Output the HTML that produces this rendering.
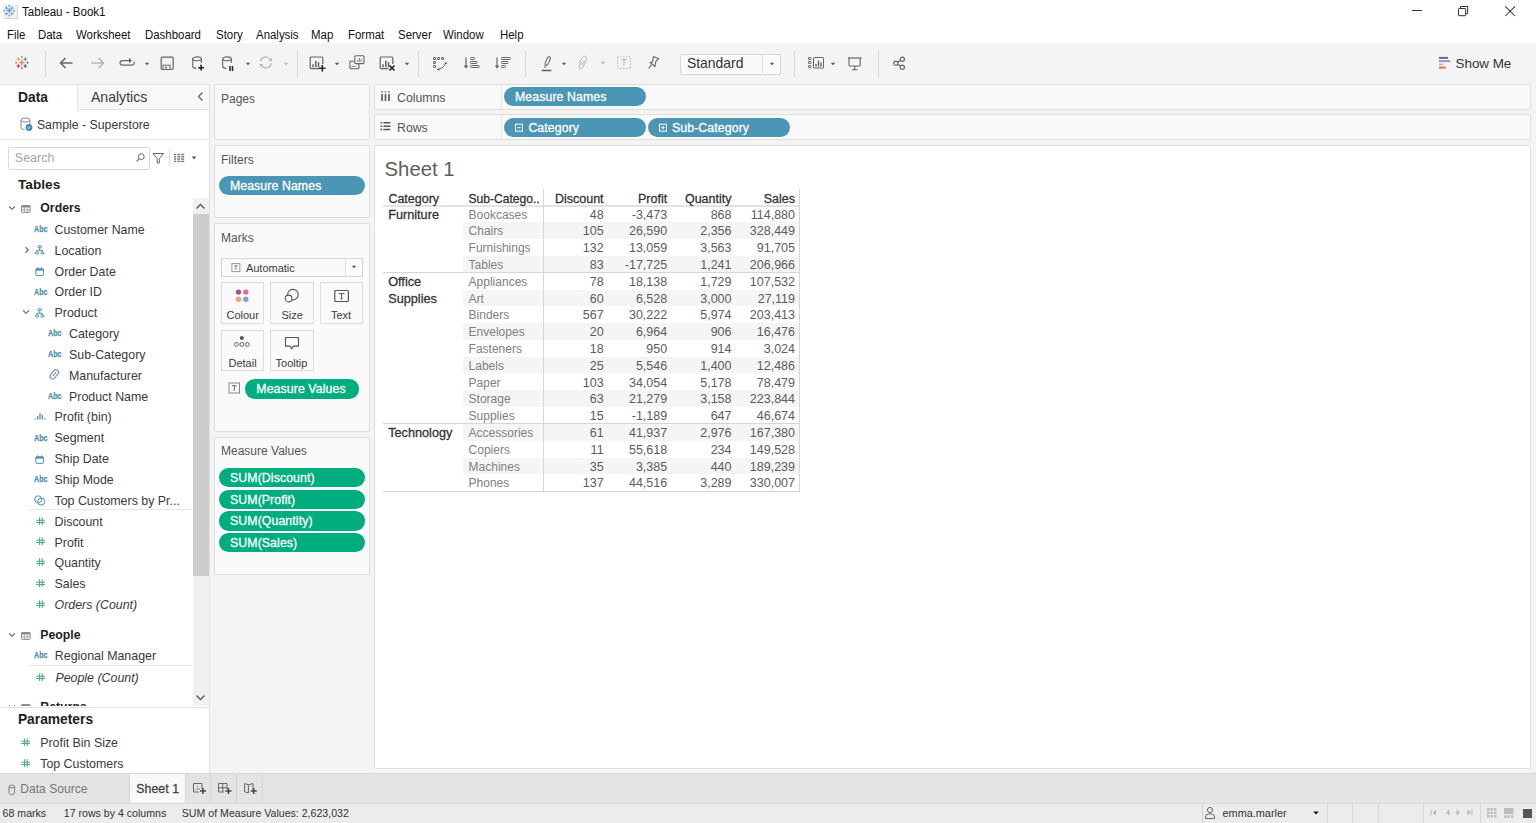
<!DOCTYPE html>
<html><head><meta charset="utf-8"><title>Tableau - Book1</title>
<style>
html,body{margin:0;padding:0;width:1536px;height:823px;overflow:hidden;background:#fff;}
body{position:relative;font-family:"Liberation Sans",sans-serif;}
body div{position:absolute;}
.t{white-space:nowrap;line-height:1;}
svg{overflow:visible}
</style></head><body>
<div style="left:0px;top:0px;width:1536px;height:43px;background:#fff"></div>
<div style="left:0px;top:43px;width:1536px;height:41px;background:#f4f4f4"></div>
<div style="left:0px;top:84px;width:1536px;height:689px;background:#f4f4f4"></div>
<div style="left:0px;top:84px;width:210px;height:1px;background:#e0e0e0"></div>
<div style="left:0px;top:85px;width:209px;height:688px;background:#fff"></div>
<div style="left:209px;top:85px;width:1px;height:688px;background:#e2e2e2"></div>
<div style="left:0px;top:773px;width:1536px;height:30px;background:#e4e4e4"></div>
<div style="left:0px;top:773px;width:1536px;height:1px;background:#d8d8d8"></div>
<div style="left:0px;top:803px;width:1536px;height:20px;background:#ececec"></div>
<div style="left:0px;top:803px;width:1536px;height:1px;background:#d9d9d9"></div>
<div class="t" style="left:21.5px;top:6.00px;font-size:12.3px;color:#111;font-weight:400;transform:scaleX(0.94);transform-origin:0 0;">Tableau - Book1</div>
<div style="left:1412px;top:10px;width:10px;height:1px;background:#333"></div>
<svg style="position:absolute;left:1456px;top:4px;" width="14" height="14" viewBox="0 0 14 14"><rect x="2.5" y="4.5" width="7.2" height="7.2" rx="0.6" fill="none" stroke="#333"/><path d="M4.5 4.3V2.5h7.2v7.2h-1.9" fill="none" stroke="#333"/></svg>
<svg style="position:absolute;left:1504px;top:5px;" width="13" height="13" viewBox="0 0 13 13"><path d="M1.3 1.3L11 11M11 1.3L1.3 11" stroke="#333" stroke-width="1.05"/></svg>
<div class="t" style="left:6.5px;top:29.00px;font-size:12.5px;color:#111;font-weight:400;transform:scaleX(0.915);transform-origin:0 0;">File</div>
<div class="t" style="left:38.3px;top:29.00px;font-size:12.5px;color:#111;font-weight:400;transform:scaleX(0.915);transform-origin:0 0;">Data</div>
<div class="t" style="left:76.3px;top:29.00px;font-size:12.5px;color:#111;font-weight:400;transform:scaleX(0.915);transform-origin:0 0;">Worksheet</div>
<div class="t" style="left:144.5px;top:29.00px;font-size:12.5px;color:#111;font-weight:400;transform:scaleX(0.915);transform-origin:0 0;">Dashboard</div>
<div class="t" style="left:215.6px;top:29.00px;font-size:12.5px;color:#111;font-weight:400;transform:scaleX(0.915);transform-origin:0 0;">Story</div>
<div class="t" style="left:256px;top:29.00px;font-size:12.5px;color:#111;font-weight:400;transform:scaleX(0.915);transform-origin:0 0;">Analysis</div>
<div class="t" style="left:310.7px;top:29.00px;font-size:12.5px;color:#111;font-weight:400;transform:scaleX(0.915);transform-origin:0 0;">Map</div>
<div class="t" style="left:347.7px;top:29.00px;font-size:12.5px;color:#111;font-weight:400;transform:scaleX(0.915);transform-origin:0 0;">Format</div>
<div class="t" style="left:397.7px;top:29.00px;font-size:12.5px;color:#111;font-weight:400;transform:scaleX(0.915);transform-origin:0 0;">Server</div>
<div class="t" style="left:443.3px;top:29.00px;font-size:12.5px;color:#111;font-weight:400;transform:scaleX(0.915);transform-origin:0 0;">Window</div>
<div class="t" style="left:500.3px;top:29.00px;font-size:12.5px;color:#111;font-weight:400;transform:scaleX(0.915);transform-origin:0 0;">Help</div>
<div style="left:45px;top:51px;width:1px;height:26px;background:#dadada"></div>
<div style="left:297px;top:51px;width:1px;height:26px;background:#dadada"></div>
<div style="left:418px;top:51px;width:1px;height:26px;background:#dadada"></div>
<div style="left:525px;top:51px;width:1px;height:26px;background:#dadada"></div>
<div style="left:794px;top:51px;width:1px;height:26px;background:#dadada"></div>
<div style="left:878px;top:51px;width:1px;height:26px;background:#dadada"></div>
<svg style="position:absolute;left:14px;top:55px;" width="16" height="16" viewBox="0 0 16 16"><path d="M5.05 7.6h5.6M7.85 4.8v5.6" stroke="#ef8a50" stroke-width="1.4"/><path d="M2.7 4.1h3.4M4.4 2.3999999999999995v3.4" stroke="#f4a34b" stroke-width="1.1"/><path d="M9.600000000000001 4.1h3.4M11.3 2.3999999999999995v3.4" stroke="#5b879b" stroke-width="1.1"/><path d="M2.7 11h3.4M4.4 9.3v3.4" stroke="#c72d4f" stroke-width="1.2"/><path d="M9.600000000000001 11h3.4M11.3 9.3v3.4" stroke="#3c5a8e" stroke-width="1.2"/><path d="M6.85 1.8h2M7.85 0.8v2" stroke="#7099a6" stroke-width="0.9"/><path d="M1.2000000000000002 7.6h2M2.2 6.6v2" stroke="#6a9bb5" stroke-width="0.9"/><path d="M12.5 7.6h2M13.5 6.6v2" stroke="#59578e" stroke-width="0.9"/><path d="M6.85 13.2h2M7.85 12.2v2" stroke="#6b6fa5" stroke-width="0.9"/></svg>
<svg style="position:absolute;left:59px;top:57px;" width="15" height="12" viewBox="0 0 15 12"><path d="M1.5 6H13.5M6.5 1L1.5 6L6.5 11" fill="none" stroke="#646464" stroke-width="1.5"/></svg>
<svg style="position:absolute;left:90px;top:57px;" width="15" height="12" viewBox="0 0 15 12"><path d="M13.5 6H1.5M8.5 1L13.5 6L8.5 11" fill="none" stroke="#b5b5b5" stroke-width="1.5"/></svg>
<svg style="position:absolute;left:119px;top:55px;" width="17" height="12" viewBox="0 0 17 12"><path d="M10.5 5.6H3.3a2.25 2.25 0 0 0 0 4.5H13a2.25 2.25 0 0 0 1.9-3.5" fill="none" stroke="#646464" stroke-width="1.15"/><path d="M10 2.7L12.9 5.6L10 8.5z" fill="#646464"/></svg>
<svg style="position:absolute;left:143.8px;top:61.5px;" width="6" height="4" viewBox="0 0 6 4"><path d="M0.7999999999999998 0.7h4.4l-2.2 2.6z" fill="#555"/></svg>
<svg style="position:absolute;left:160px;top:56px;" width="15" height="15" viewBox="0 0 15 15"><rect x="1.2" y="1.2" width="12" height="12.3" rx="1.2" fill="none" stroke="#646464" stroke-width="1.2"/><rect x="3" y="9.2" width="7" height="4.3" fill="none" stroke="#646464" stroke-width="1"/><rect x="5" y="10.8" width="2" height="1.5" fill="#646464"/></svg>
<svg style="position:absolute;left:192px;top:56px;" width="14" height="16" viewBox="0 0 14 16"><ellipse cx="5" cy="2.8" rx="4.3" ry="1.9" fill="none" stroke="#646464" stroke-width="1.1"/><path d="M0.7 2.8V10.5c0 1 1.5 1.7 3.5 1.9M9.3 2.8V7" fill="none" stroke="#646464" stroke-width="1.1"/><path d="M6.2 11.7H12M9.1 8.8V14.6" stroke="#222" stroke-width="1.6"/></svg>
<svg style="position:absolute;left:222px;top:56px;" width="14" height="16" viewBox="0 0 14 16"><ellipse cx="5" cy="2.8" rx="4.3" ry="1.9" fill="none" stroke="#646464" stroke-width="1.1"/><path d="M0.7 2.8V10.5c0 1 1.5 1.7 3.5 1.9M9.3 2.8V7" fill="none" stroke="#646464" stroke-width="1.1"/><path d="M8 10v5M10.5 10v5" stroke="#222" stroke-width="1.5"/></svg>
<svg style="position:absolute;left:244.6px;top:61.5px;" width="6" height="4" viewBox="0 0 6 4"><path d="M0.7999999999999998 0.7h4.4l-2.2 2.6z" fill="#555"/></svg>
<svg style="position:absolute;left:258px;top:55px;" width="16" height="15" viewBox="0 0 16 15"><path d="M2.5 6.5A5.5 5.5 0 0 1 12.5 4.5M13.3 8.3A5.5 5.5 0 0 1 3.3 10.3" fill="none" stroke="#b5b5b5" stroke-width="1.2"/><path d="M13.8 2.5v3.5h-3.5z" fill="#b5b5b5"/><path d="M2 12.5V9h3.5z" fill="#b5b5b5"/></svg>
<svg style="position:absolute;left:283px;top:61.5px;" width="6" height="4" viewBox="0 0 6 4"><path d="M0.7999999999999998 0.7h4.4l-2.2 2.6z" fill="#b5b5b5"/></svg>
<svg style="position:absolute;left:309px;top:56px;" width="18" height="16" viewBox="0 0 18 16"><path d="M10 12.7H2.2a1 1 0 0 1-1-1V2a1 1 0 0 1 1-1h10.6a1 1 0 0 1 1 1v6" fill="none" stroke="#646464" stroke-width="1.2"/><path d="M4 8.3v2.9M6.8 4.8v6.4M9.5 6.3v4.9" stroke="#646464" stroke-width="1.5"/><path d="M10 12.2h6.5M13.3 9v6.5" stroke="#222" stroke-width="1.6"/></svg>
<svg style="position:absolute;left:334.3px;top:61.5px;" width="6" height="4" viewBox="0 0 6 4"><path d="M0.7999999999999998 0.7h4.4l-2.2 2.6z" fill="#555"/></svg>
<svg style="position:absolute;left:349px;top:55px;" width="16" height="15" viewBox="0 0 16 15"><rect x="5.8" y="0.8" width="9.2" height="7.8" rx="1" fill="#f3f3f3" stroke="#646464" stroke-width="1.1"/><path d="M8.5 6.8v-1.4M10.3 6.8V3M12.1 6.8V4.3" stroke="#646464" stroke-width="0.9"/><path d="M5.5 6.2H1.8a0.9 0.9 0 0 0-0.9 0.9v5.8a0.9 0.9 0 0 0 0.9 0.9h7.2a0.9 0.9 0 0 0 0.9-0.9V8.8" fill="none" stroke="#646464" stroke-width="1.1"/><path d="M3 12v-1M4.6 12v-1M6.2 12v-1" stroke="#646464" stroke-width="0.9"/></svg>
<svg style="position:absolute;left:379px;top:56px;" width="18" height="16" viewBox="0 0 18 16"><path d="M9.5 12.7H2.2a1 1 0 0 1-1-1V2a1 1 0 0 1 1-1h10.6a1 1 0 0 1 1 1v6" fill="none" stroke="#646464" stroke-width="1.2"/><path d="M4 8.3v2.9M6.8 4.8v6.4M9.5 6.3v4.9" stroke="#646464" stroke-width="1.5"/><path d="M10.5 9.5l5 5M15.5 9.5l-5 5" stroke="#222" stroke-width="1.6"/></svg>
<svg style="position:absolute;left:404px;top:61.5px;" width="6" height="4" viewBox="0 0 6 4"><path d="M0.7999999999999998 0.7h4.4l-2.2 2.6z" fill="#555"/></svg>
<svg style="position:absolute;left:432px;top:56px;" width="16" height="16" viewBox="0 0 16 16"><g fill="none" stroke="#646464" stroke-width="1"><rect x="1.5" y="1.5" width="2" height="2" rx="0.3"/><rect x="5.5" y="1.5" width="2" height="2" rx="0.3"/><rect x="9.5" y="1.5" width="2" height="2" rx="0.3"/><rect x="1.5" y="5.5" width="2" height="2" rx="0.3"/><rect x="1.5" y="9.5" width="2" height="2" rx="0.3"/><path d="M6.5 13.3Q12 12 13.2 7.3"/></g><path d="M13.8 5.5l1.6 2.3-2.6 0.4z M4.6 13.5l2.6-1.4 0.2 2.6z" fill="#646464"/></svg>
<svg style="position:absolute;left:463px;top:56px;" width="17" height="15" viewBox="0 0 17 15"><path d="M3 1.5v9" stroke="#646464" stroke-width="1.2"/><path d="M0.8 9.6h4.4L3 12.8z" fill="#646464"/><g fill="none" stroke="#646464" stroke-width="1"><rect x="7.5" y="1.5" width="4" height="2" rx="0.8"/><rect x="7.5" y="5.5" width="6.5" height="2" rx="0.8"/><rect x="7.5" y="9.5" width="8.8" height="2" rx="0.8"/></g></svg>
<svg style="position:absolute;left:494px;top:56px;" width="17" height="15" viewBox="0 0 17 15"><path d="M3 1.5v9" stroke="#646464" stroke-width="1.2"/><path d="M0.8 9.6h4.4L3 12.8z" fill="#646464"/><g fill="none" stroke="#646464" stroke-width="1"><rect x="7.5" y="1.5" width="8.8" height="2" rx="0.8"/><rect x="7.5" y="5.5" width="6.5" height="2" rx="0.8"/><rect x="7.5" y="9.5" width="4" height="2" rx="0.8"/></g></svg>
<svg style="position:absolute;left:540px;top:55px;" width="13" height="17" viewBox="0 0 13 17"><g transform="rotate(24 7.5 6.5)" fill="none" stroke="#646464" stroke-width="1.05"><rect x="6" y="1.5" width="3" height="8.5" rx="1.3"/><path d="M6.3 11.3h2.4M6.8 12.8h1.2"/></g><path d="M1.7 15.5h9.6" stroke="#646464" stroke-width="1.6"/></svg>
<svg style="position:absolute;left:560.8px;top:61.5px;" width="6" height="4" viewBox="0 0 6 4"><path d="M0.7999999999999998 0.7h4.4l-2.2 2.6z" fill="#555"/></svg>
<svg style="position:absolute;left:576px;top:55px;" width="14" height="16" viewBox="0 0 14 16"><path d="M5.3 6.8L3 11.5a1.9 1.9 0 0 0 3.4 1.6L10.6 4.4a2.3 2.3 0 0 0-4.2-2L3.5 8.3M8.3 5.5L6 10.2" fill="none" stroke="#b5b5b5" stroke-width="1"/></svg>
<svg style="position:absolute;left:599.8px;top:61px;" width="6" height="4" viewBox="0 0 6 4"><path d="M0.7999999999999998 0.7h4.4l-2.2 2.6z" fill="#b5b5b5"/></svg>
<svg style="position:absolute;left:616px;top:56px;" width="16" height="14" viewBox="0 0 16 14"><rect x="1.5" y="1" width="13" height="11.5" fill="none" stroke="#b5b5b5" stroke-width="1" stroke-dasharray="1.5 1.3"/><path d="M5.2 3.6h5.6M8 3.6v6" stroke="#b5b5b5" stroke-width="1"/></svg>
<svg style="position:absolute;left:647px;top:55px;" width="13" height="15" viewBox="0 0 13 15"><path d="M6.5 1.5l5 2.3-2.6 2.6-1 5.3-2.3-2.3L3 7.5l2.5-0.6z M4.5 9.5L1.8 13.5" fill="none" stroke="#646464" stroke-width="1.1" stroke-linejoin="round"/></svg>
<div style="left:679.5px;top:53.5px;width:101px;height:21px;background:#fafafa;border:1px solid #d6d6d6;border-radius:2px;box-sizing:border-box"></div>
<div style="left:762px;top:54.5px;width:1px;height:19px;background:#e0e0e0"></div>
<div class="t" style="left:687px;top:57.00px;font-size:13.9px;color:#333;font-weight:400;">Standard</div>
<svg style="position:absolute;left:768.5px;top:61.6px;" width="6" height="4" viewBox="0 0 6 4"><path d="M0.7999999999999998 0.7h4.4l-2.2 2.6z" fill="#555"/></svg>
<svg style="position:absolute;left:807px;top:56px;" width="18" height="14" viewBox="0 0 18 14"><g fill="none" stroke="#646464" stroke-width="1"><rect x="1.5" y="1.5" width="2.5" height="2" rx="0.4"/><rect x="1.5" y="5.5" width="2.5" height="2" rx="0.4"/><rect x="1.5" y="9.5" width="2.5" height="2" rx="0.4"/><rect x="6.5" y="1.5" width="10" height="10.5" rx="0.6"/></g><path d="M9 10.5v-2.5M11.5 10.5V4.5M14 10.5V6.5" stroke="#646464" stroke-width="1.4"/></svg>
<svg style="position:absolute;left:830px;top:61.5px;" width="6" height="4" viewBox="0 0 6 4"><path d="M0.7999999999999998 0.7h4.4l-2.2 2.6z" fill="#555"/></svg>
<svg style="position:absolute;left:847px;top:56px;" width="16" height="15" viewBox="0 0 16 15"><path d="M0.8 2h14" stroke="#646464" stroke-width="1.2"/><path d="M2 2v7.2a0.8 0.8 0 0 0 0.8 0.8h9.6a0.8 0.8 0 0 0 0.8-0.8V2M7.7 10v3.8M5 13.7h5.5" fill="none" stroke="#646464" stroke-width="1.1"/></svg>
<svg style="position:absolute;left:892px;top:55px;" width="15" height="16" viewBox="0 0 15 16"><g fill="none" stroke="#646464" stroke-width="1.2"><circle cx="10.3" cy="4.3" r="2.1"/><circle cx="3.9" cy="8.2" r="2.1"/><circle cx="10.3" cy="12.2" r="2.1"/><path d="M5.8 7.1l2.6-1.7M5.8 9.3l2.6 1.7"/></g></svg>
<svg style="position:absolute;left:1438px;top:55px;" width="14" height="15" viewBox="0 0 14 15"><rect x="1" y="1.9" width="9" height="2" fill="#7b5f8f"/><rect x="1" y="5.1" width="11.2" height="2" fill="#7ea3c9"/><rect x="1" y="8.5" width="4" height="1.7" fill="#f1a571"/><rect x="1" y="11.5" width="6.7" height="2.2" fill="#f2697f"/></svg>
<div class="t" style="left:1455.5px;top:57.00px;font-size:13.4px;color:#333;font-weight:400;">Show Me</div>
<svg style="position:absolute;left:2px;top:3px;" width="17" height="17" viewBox="0 0 17 17"><rect x="1.5" y="1.5" width="14.5" height="14.5" fill="#c8c8c8" opacity="0.8"/><rect x="1" y="1" width="14" height="14" fill="#f2f2f2"/><path d="M4.699999999999999 7.5h5.2M7.3 4.9v5.2" stroke="#5b9bcf" stroke-width="1.3"/><path d="M2.9000000000000004 5.1h3.0M4.4 3.5999999999999996v3.0" stroke="#6aa6d6" stroke-width="1.2"/><path d="M8.4 5.1h3.0M9.9 3.5999999999999996v3.0" stroke="#6aa6d6" stroke-width="1.2"/><path d="M2.9000000000000004 10.7h3.0M4.4 9.2v3.0" stroke="#6aa6d6" stroke-width="1.2"/><path d="M8.4 10.7h3.0M9.9 9.2v3.0" stroke="#6aa6d6" stroke-width="1.2"/><g fill="#6aa6d6"><circle cx="7.3" cy="2.9" r="1"/><circle cx="2.3" cy="7.7" r="1"/><circle cx="12" cy="7.7" r="1"/><circle cx="7.3" cy="12.5" r="1"/></g></svg>
<div style="left:77px;top:85px;width:132px;height:25px;background:#f8f8f8;border-left:1px solid #e3e3e3;border-bottom:1px solid #e3e3e3;box-sizing:border-box"></div>
<div class="t" style="left:18px;top:91.00px;font-size:13.8px;color:#1e1e1e;font-weight:700;">Data</div>
<div class="t" style="left:90.9px;top:90.00px;font-size:14.1px;color:#3a3a3a;font-weight:400;">Analytics</div>
<svg style="position:absolute;left:196px;top:91px;" width="9" height="11" viewBox="0 0 9 11"><path d="M6.5 1.5L2.5 5.5L6.5 9.5" fill="none" stroke="#555" stroke-width="1.1"/></svg>
<svg style="position:absolute;left:20px;top:117px;" width="14" height="15" viewBox="0 0 14 15"><path d="M1 3v7.8c0 1 1.6 1.7 3.6 1.8" fill="none" stroke="#888" stroke-width="1"/><ellipse cx="5.5" cy="3" rx="4.5" ry="2" fill="none" stroke="#888" stroke-width="1"/><path d="M10 3v4" stroke="#888" stroke-width="1"/><circle cx="9" cy="10.5" r="3.4" fill="#3d8fb5"/><path d="M7.4 10.5l1.1 1.1 2-2" fill="none" stroke="#fff" stroke-width="0.9"/></svg>
<div class="t" style="left:36.9px;top:119.00px;font-size:12.3px;color:#3a3a3a;font-weight:400;">Sample - Superstore</div>
<div style="left:0px;top:139px;width:209px;height:1px;background:#e6e6e6"></div>
<div style="left:8px;top:147px;width:142px;height:23px;background:#fff;border:1px solid #d9d9d9;border-radius:2px;box-sizing:border-box"></div>
<div class="t" style="left:14.8px;top:152.00px;font-size:12.5px;color:#a5a5a5;font-weight:400;">Search</div>
<svg style="position:absolute;left:135px;top:152px;" width="11" height="11" viewBox="0 0 11 11"><circle cx="6.3" cy="4.6" r="2.9" fill="none" stroke="#666" stroke-width="1"/><path d="M4.2 6.8L1.6 9.4" stroke="#666" stroke-width="1.1"/></svg>
<svg style="position:absolute;left:152px;top:152px;" width="13" height="12" viewBox="0 0 13 12"><path d="M1 1.5h10.5L7.3 6.5V11H5.2V6.5z" fill="none" stroke="#666" stroke-width="1" stroke-linejoin="round"/></svg>
<div style="left:169px;top:150px;width:1px;height:16px;background:#ddd"></div>
<svg style="position:absolute;left:173px;top:153px;" width="12" height="10" viewBox="0 0 12 10"><g fill="#777"><rect x="1" y="0.8" width="2" height="1.4"/><rect x="4.3" y="0.8" width="3" height="1.4"/><rect x="8.2" y="0.8" width="3" height="1.4"/><rect x="1" y="3.1" width="2" height="1.4"/><rect x="4.3" y="3.1" width="3" height="1.4"/><rect x="8.2" y="3.1" width="3" height="1.4"/><rect x="1" y="5.4" width="2" height="1.4"/><rect x="4.3" y="5.4" width="3" height="1.4"/><rect x="8.2" y="5.4" width="3" height="1.4"/><rect x="1" y="7.7" width="2" height="1.4"/><rect x="4.3" y="7.7" width="3" height="1.4"/><rect x="8.2" y="7.7" width="3" height="1.4"/></g></svg>
<svg style="position:absolute;left:191px;top:156.3px;" width="6" height="4" viewBox="0 0 6 4"><path d="M0.7000000000000002 0.6000000000000001h4.6l-2.3 2.8z" fill="#555"/></svg>
<div class="t" style="left:18px;top:178.00px;font-size:13.7px;color:#1e1e1e;font-weight:700;">Tables</div>
<svg style="position:absolute;left:7.5px;top:205px;" width="8" height="6" viewBox="0 0 8 6"><path d="M1.2 1.5L4 4.3L6.8 1.5" fill="none" stroke="#666" stroke-width="1.1"/></svg>
<svg style="position:absolute;left:21px;top:204.5px;" width="10" height="9" viewBox="0 0 10 9"><rect x="0.5" y="0.5" width="8.6" height="6.9" rx="0.8" fill="#fff" stroke="#8a8a8a" stroke-width="1"/><rect x="0.5" y="0.5" width="8.6" height="2" fill="#8a8a8a"/><path d="M3.3 2.5v5M6.2 2.5v5M0.5 4.9h8.6" stroke="#8a8a8a" stroke-width="0.7"/></svg>
<div class="t" style="left:40.3px;top:202.00px;font-size:12.3px;color:#1e1e1e;font-weight:700;">Orders</div>
<div class="t" style="left:33.5px;top:226.00px;font-size:8.2px;color:#4f8dab;font-weight:700;transform:scaleX(0.87);transform-origin:0 0;-webkit-text-stroke:0.25px #4f8dab;">Abc</div>
<div class="t" style="left:54.5px;top:224.00px;font-size:12.4px;color:#3a3a3a;font-weight:400;">Customer Name</div>
<svg style="position:absolute;left:34.8px;top:245.05px;" width="10" height="10" viewBox="0 0 10 10"><g fill="none" stroke="#4f8dab" stroke-width="1"><rect x="3" y="0.7" width="3.4" height="2" rx="1"/><path d="M4.7 2.7v2.6M1.9 7V5.3h5.6V7"/><rect x="0.4" y="7" width="3.2" height="2" rx="1"/><rect x="5.8" y="7" width="3.2" height="2" rx="1"/></g></svg>
<svg style="position:absolute;left:23.5px;top:245.65px;" width="6" height="8" viewBox="0 0 6 8"><path d="M1.5 1.2L4.3 4L1.5 6.8" fill="none" stroke="#666" stroke-width="1.1"/></svg>
<div class="t" style="left:54.5px;top:245.00px;font-size:12.4px;color:#3a3a3a;font-weight:400;">Location</div>
<svg style="position:absolute;left:35.2px;top:267.3px;" width="10" height="10" viewBox="0 0 10 10"><rect x="0.8" y="1.8" width="7.6" height="6.6" rx="0.7" fill="none" stroke="#4f8dab" stroke-width="1"/><rect x="0.8" y="1.8" width="7.6" height="1.8" fill="#4f8dab"/><path d="M2.6 0.3v1.8M6.6 0.3v1.8" stroke="#4f8dab" stroke-width="1"/></svg>
<div class="t" style="left:54.5px;top:266.00px;font-size:12.4px;color:#3a3a3a;font-weight:400;">Order Date</div>
<div class="t" style="left:33.5px;top:289.00px;font-size:8.2px;color:#4f8dab;font-weight:700;transform:scaleX(0.87);transform-origin:0 0;-webkit-text-stroke:0.25px #4f8dab;">Abc</div>
<div class="t" style="left:54.5px;top:286.00px;font-size:12.4px;color:#3a3a3a;font-weight:400;">Order ID</div>
<svg style="position:absolute;left:34.8px;top:307.6px;" width="10" height="10" viewBox="0 0 10 10"><g fill="none" stroke="#4f8dab" stroke-width="1"><rect x="3" y="0.7" width="3.4" height="2" rx="1"/><path d="M4.7 2.7v2.6M1.9 7V5.3h5.6V7"/><rect x="0.4" y="7" width="3.2" height="2" rx="1"/><rect x="5.8" y="7" width="3.2" height="2" rx="1"/></g></svg>
<svg style="position:absolute;left:22px;top:308.70000000000005px;" width="8" height="6" viewBox="0 0 8 6"><path d="M1.2 1.5L4 4.3L6.8 1.5" fill="none" stroke="#666" stroke-width="1.1"/></svg>
<div class="t" style="left:54.5px;top:307.00px;font-size:12.4px;color:#3a3a3a;font-weight:400;">Product</div>
<div class="t" style="left:48px;top:330.00px;font-size:8.2px;color:#4f8dab;font-weight:700;transform:scaleX(0.87);transform-origin:0 0;-webkit-text-stroke:0.25px #4f8dab;">Abc</div>
<div class="t" style="left:69px;top:328.00px;font-size:12.4px;color:#3a3a3a;font-weight:400;">Category</div>
<div class="t" style="left:48px;top:351.00px;font-size:8.2px;color:#4f8dab;font-weight:700;transform:scaleX(0.87);transform-origin:0 0;-webkit-text-stroke:0.25px #4f8dab;">Abc</div>
<div class="t" style="left:69px;top:349.00px;font-size:12.4px;color:#3a3a3a;font-weight:400;">Sub-Category</div>
<svg style="position:absolute;left:49px;top:368.75px;" width="11" height="11" viewBox="0 0 11 11"><g transform="rotate(40 5.5 5.5)" fill="none" stroke="#4f8dab" stroke-width="1"><rect x="2.6" y="0.3" width="5.2" height="10.4" rx="2.6"/><path d="M5.2 2.8v5.2"/></g></svg>
<div class="t" style="left:69px;top:370.00px;font-size:12.4px;color:#3a3a3a;font-weight:400;">Manufacturer</div>
<div class="t" style="left:48px;top:393.00px;font-size:8.2px;color:#4f8dab;font-weight:700;transform:scaleX(0.87);transform-origin:0 0;-webkit-text-stroke:0.25px #4f8dab;">Abc</div>
<div class="t" style="left:69px;top:391.00px;font-size:12.4px;color:#3a3a3a;font-weight:400;">Product Name</div>
<svg style="position:absolute;left:33.8px;top:412.45000000000005px;" width="12" height="8" viewBox="0 0 12 8"><path d="M1 6.6v1M3.6 4v3.6M6 1v6.6M8.4 3v4.6M11 6.2v1.4" stroke="#4f8dab" stroke-width="1.3"/></svg>
<div class="t" style="left:54.5px;top:411.00px;font-size:12.4px;color:#3a3a3a;font-weight:400;">Profit (bin)</div>
<div class="t" style="left:33.5px;top:435.00px;font-size:8.2px;color:#4f8dab;font-weight:700;transform:scaleX(0.87);transform-origin:0 0;-webkit-text-stroke:0.25px #4f8dab;">Abc</div>
<div class="t" style="left:54.5px;top:432.00px;font-size:12.4px;color:#3a3a3a;font-weight:400;">Segment</div>
<svg style="position:absolute;left:35.2px;top:454.95000000000005px;" width="10" height="10" viewBox="0 0 10 10"><rect x="0.8" y="1.8" width="7.6" height="6.6" rx="0.7" fill="none" stroke="#4f8dab" stroke-width="1"/><rect x="0.8" y="1.8" width="7.6" height="1.8" fill="#4f8dab"/><path d="M2.6 0.3v1.8M6.6 0.3v1.8" stroke="#4f8dab" stroke-width="1"/></svg>
<div class="t" style="left:54.5px;top:453.00px;font-size:12.4px;color:#3a3a3a;font-weight:400;">Ship Date</div>
<div class="t" style="left:33.5px;top:476.00px;font-size:8.2px;color:#4f8dab;font-weight:700;transform:scaleX(0.87);transform-origin:0 0;-webkit-text-stroke:0.25px #4f8dab;">Abc</div>
<div class="t" style="left:54.5px;top:474.00px;font-size:12.4px;color:#3a3a3a;font-weight:400;">Ship Mode</div>
<svg style="position:absolute;left:33.8px;top:494.65000000000003px;" width="12" height="11" viewBox="0 0 12 11"><circle cx="4.3" cy="4.3" r="3.5" fill="none" stroke="#4f8dab" stroke-width="1"/><circle cx="7.2" cy="6.6" r="3.5" fill="none" stroke="#4f8dab" stroke-width="1"/></svg>
<div class="t" style="left:54.5px;top:495.00px;font-size:12.4px;color:#3a3a3a;font-weight:400;">Top Customers by Pr...</div>
<svg style="position:absolute;left:36px;top:517px;" width="10" height="9" viewBox="0 0 10 9"><path d="M3.6 0.2v7.8M6.2 0.2v7.8M0.2 3.2h8.8M0.2 5.5h8.8" stroke="#4ba98a" stroke-width="1.05"/></svg>
<div class="t" style="left:54.5px;top:516.00px;font-size:12.4px;color:#3a3a3a;font-weight:400;">Discount</div>
<svg style="position:absolute;left:36px;top:537px;" width="10" height="9" viewBox="0 0 10 9"><path d="M3.6 0.2v7.8M6.2 0.2v7.8M0.2 3.2h8.8M0.2 5.5h8.8" stroke="#4ba98a" stroke-width="1.05"/></svg>
<div class="t" style="left:54.5px;top:537.00px;font-size:12.4px;color:#3a3a3a;font-weight:400;">Profit</div>
<svg style="position:absolute;left:36px;top:558px;" width="10" height="9" viewBox="0 0 10 9"><path d="M3.6 0.2v7.8M6.2 0.2v7.8M0.2 3.2h8.8M0.2 5.5h8.8" stroke="#4ba98a" stroke-width="1.05"/></svg>
<div class="t" style="left:54.5px;top:557.00px;font-size:12.4px;color:#3a3a3a;font-weight:400;">Quantity</div>
<svg style="position:absolute;left:36px;top:579px;" width="10" height="9" viewBox="0 0 10 9"><path d="M3.6 0.2v7.8M6.2 0.2v7.8M0.2 3.2h8.8M0.2 5.5h8.8" stroke="#4ba98a" stroke-width="1.05"/></svg>
<div class="t" style="left:54.5px;top:578.00px;font-size:12.4px;color:#3a3a3a;font-weight:400;">Sales</div>
<svg style="position:absolute;left:36px;top:600px;" width="10" height="9" viewBox="0 0 10 9"><path d="M3.6 0.2v7.8M6.2 0.2v7.8M0.2 3.2h8.8M0.2 5.5h8.8" stroke="#4ba98a" stroke-width="1.05"/></svg>
<div class="t" style="left:54.5px;top:599.00px;font-size:12.4px;color:#3a3a3a;font-weight:400;"><i>Orders (Count)</i></div>
<div style="left:29px;top:509px;width:163px;height:1px;background:#e8e8e8"></div>
<svg style="position:absolute;left:7.5px;top:632px;" width="8" height="6" viewBox="0 0 8 6"><path d="M1.2 1.5L4 4.3L6.8 1.5" fill="none" stroke="#666" stroke-width="1.1"/></svg>
<svg style="position:absolute;left:21px;top:631.5px;" width="10" height="9" viewBox="0 0 10 9"><rect x="0.5" y="0.5" width="8.6" height="6.9" rx="0.8" fill="#fff" stroke="#8a8a8a" stroke-width="1"/><rect x="0.5" y="0.5" width="8.6" height="2" fill="#8a8a8a"/><path d="M3.3 2.5v5M6.2 2.5v5M0.5 4.9h8.6" stroke="#8a8a8a" stroke-width="0.7"/></svg>
<div class="t" style="left:40.3px;top:629.00px;font-size:12.3px;color:#1e1e1e;font-weight:700;">People</div>
<div class="t" style="left:33.5px;top:652.00px;font-size:8.2px;color:#4f8dab;font-weight:700;transform:scaleX(0.87);transform-origin:0 0;-webkit-text-stroke:0.25px #4f8dab;">Abc</div>
<div class="t" style="left:54.8px;top:650.00px;font-size:12.4px;color:#3a3a3a;font-weight:400;">Regional Manager</div>
<div style="left:29px;top:665px;width:163px;height:1px;background:#e8e8e8"></div>
<svg style="position:absolute;left:36px;top:673px;" width="10" height="9" viewBox="0 0 10 9"><path d="M3.6 0.2v7.8M6.2 0.2v7.8M0.2 3.2h8.8M0.2 5.5h8.8" stroke="#4ba98a" stroke-width="1.05"/></svg>
<div class="t" style="left:55.4px;top:672.00px;font-size:12.4px;color:#3a3a3a;font-weight:400;"><i>People (Count)</i></div>
<svg style="position:absolute;left:7.5px;top:704px;" width="8" height="6" viewBox="0 0 8 6"><path d="M1.2 1.5L4 4.3L6.8 1.5" fill="none" stroke="#666" stroke-width="1.1"/></svg>
<svg style="position:absolute;left:21px;top:703.5px;" width="10" height="9" viewBox="0 0 10 9"><rect x="0.5" y="0.5" width="8.6" height="6.9" rx="0.8" fill="#fff" stroke="#8a8a8a" stroke-width="1"/><rect x="0.5" y="0.5" width="8.6" height="2" fill="#8a8a8a"/><path d="M3.3 2.5v5M6.2 2.5v5M0.5 4.9h8.6" stroke="#8a8a8a" stroke-width="0.7"/></svg>
<div class="t" style="left:40.3px;top:701.00px;font-size:12.3px;color:#1e1e1e;font-weight:700;">Returns</div>
<div style="left:0px;top:705.5px;width:209px;height:67.5px;background:#fff"></div>
<div style="left:193px;top:198px;width:15.5px;height:507.5px;background:#f0f0f0"></div>
<div style="left:193px;top:214.3px;width:15.5px;height:362.2px;background:#cdcdcd"></div>
<svg style="position:absolute;left:195px;top:203px;" width="11" height="7" viewBox="0 0 11 7"><path d="M1.5 5.5L5.5 1.5L9.5 5.5" fill="none" stroke="#555" stroke-width="1.3"/></svg>
<svg style="position:absolute;left:195px;top:694px;" width="11" height="7" viewBox="0 0 11 7"><path d="M1.5 1.5L5.5 5.5L9.5 1.5" fill="none" stroke="#555" stroke-width="1.3"/></svg>
<div style="left:0px;top:707px;width:209px;height:1px;background:#e3e3e3"></div>
<div class="t" style="left:17.9px;top:713.00px;font-size:13.8px;color:#1e1e1e;font-weight:700;">Parameters</div>
<svg style="position:absolute;left:21px;top:738px;" width="10" height="9" viewBox="0 0 10 9"><path d="M3.6 0.2v7.8M6.2 0.2v7.8M0.2 3.2h8.8M0.2 5.5h8.8" stroke="#4ba98a" stroke-width="1.05"/></svg>
<div class="t" style="left:40.2px;top:737.00px;font-size:12.4px;color:#3a3a3a;font-weight:400;">Profit Bin Size</div>
<svg style="position:absolute;left:21px;top:759px;" width="10" height="9" viewBox="0 0 10 9"><path d="M3.6 0.2v7.8M6.2 0.2v7.8M0.2 3.2h8.8M0.2 5.5h8.8" stroke="#4ba98a" stroke-width="1.05"/></svg>
<div class="t" style="left:40.2px;top:758.00px;font-size:12.4px;color:#3a3a3a;font-weight:400;">Top Customers</div>
<div style="left:214px;top:84px;width:156px;height:56px;background:#fafafa;border:1px solid #dedede;border-radius:2px;box-sizing:border-box"></div>
<div class="t" style="left:221px;top:93.00px;font-size:12px;color:#555;font-weight:400;">Pages</div>
<div style="left:214px;top:145px;width:156px;height:73px;background:#fafafa;border:1px solid #dedede;border-radius:2px;box-sizing:border-box"></div>
<div class="t" style="left:221px;top:154.00px;font-size:12px;color:#555;font-weight:400;">Filters</div>
<div style="left:219px;top:176px;width:146px;height:19.2px;background:#4a96b4;border-radius:9.6px"></div>
<div class="t" style="left:229.9px;top:180.00px;font-size:12.3px;color:#fff;font-weight:400;letter-spacing:0.1px;-webkit-text-stroke:0.28px #fff;">Measure Names</div>
<div style="left:214px;top:223px;width:156px;height:209px;background:#fafafa;border:1px solid #dedede;border-radius:2px;box-sizing:border-box"></div>
<div class="t" style="left:221px;top:232.00px;font-size:12px;color:#555;font-weight:400;">Marks</div>
<div style="left:221px;top:257.5px;width:142px;height:19.5px;background:#fafafa;border:1px solid #d6d6d6;box-sizing:border-box"></div>
<div style="left:345px;top:258px;width:1px;height:18.5px;background:#e0e0e0"></div>
<svg style="position:absolute;left:231px;top:263px;" width="10" height="10" viewBox="0 0 10 10"><rect x="0.9" y="0.6" width="8" height="8" fill="none" stroke="#999" stroke-width="1"/><path d="M3 2.8h3.8M4.9 2.8v4" stroke="#888" stroke-width="1"/></svg>
<div class="t" style="left:245.9px;top:263.00px;font-size:11px;color:#3a3a3a;font-weight:400;">Automatic</div>
<svg style="position:absolute;left:350.5px;top:265px;" width="6" height="4" viewBox="0 0 6 4"><path d="M0.7999999999999998 0.7h4.4l-2.2 2.6z" fill="#555"/></svg>
<div style="left:221px;top:282.3px;width:43px;height:41.5px;background:#fafafa;border:1px solid #dcdcdc;box-sizing:border-box"></div>
<div style="left:269.5px;top:282.3px;width:44.5px;height:41.5px;background:#fafafa;border:1px solid #dcdcdc;box-sizing:border-box"></div>
<div style="left:320px;top:282.3px;width:43px;height:41.5px;background:#fafafa;border:1px solid #dcdcdc;box-sizing:border-box"></div>
<div style="left:221px;top:329.5px;width:43px;height:41.5px;background:#fafafa;border:1px solid #dcdcdc;box-sizing:border-box"></div>
<div style="left:269.5px;top:329.5px;width:44.5px;height:41.5px;background:#fafafa;border:1px solid #dcdcdc;box-sizing:border-box"></div>
<svg style="position:absolute;left:234px;top:288px;" width="16" height="15" viewBox="0 0 16 15"><circle cx="4.5" cy="4.1" r="2.7" fill="#7e6592"/><circle cx="11.8" cy="4.1" r="2.7" fill="#f06a83"/><circle cx="4.5" cy="11.2" r="2.7" fill="#f2a56f"/><circle cx="11.8" cy="11.2" r="2.7" fill="#7ea4ca"/></svg>
<div class="t" style="left:226.5px;top:310.00px;font-size:11px;color:#3a3a3a;font-weight:400;">Colour</div>
<svg style="position:absolute;left:284px;top:288px;" width="16" height="16" viewBox="0 0 16 16"><circle cx="8.9" cy="6.7" r="5.3" fill="none" stroke="#555" stroke-width="1.1"/><circle cx="4.6" cy="10.5" r="3.4" fill="#fafafa" stroke="#555" stroke-width="1.1"/></svg>
<div class="t" style="left:281.5px;top:310.00px;font-size:11px;color:#3a3a3a;font-weight:400;">Size</div>
<svg style="position:absolute;left:333px;top:289px;" width="17" height="14" viewBox="0 0 17 14"><rect x="1.8" y="1.5" width="13.6" height="11" rx="1" fill="none" stroke="#555" stroke-width="1.2"/><path d="M5.8 4.6h5.6M8.6 4.6v5.2M7.4 9.8h2.4" fill="none" stroke="#555" stroke-width="1"/></svg>
<div class="t" style="left:331px;top:310.00px;font-size:11px;color:#3a3a3a;font-weight:400;">Text</div>
<svg style="position:absolute;left:233px;top:335px;" width="18" height="14" viewBox="0 0 18 14"><circle cx="8.8" cy="3" r="2" fill="#555"/><circle cx="3.4" cy="9.4" r="1.9" fill="none" stroke="#555" stroke-width="0.9"/><circle cx="8.8" cy="9.4" r="1.9" fill="none" stroke="#555" stroke-width="0.9"/><circle cx="14.2" cy="9.4" r="1.9" fill="none" stroke="#555" stroke-width="0.9"/></svg>
<div class="t" style="left:228.5px;top:358.00px;font-size:11px;color:#3a3a3a;font-weight:400;">Detail</div>
<svg style="position:absolute;left:284px;top:336px;" width="17" height="15" viewBox="0 0 17 15"><path d="M1.5 1.5h13v8.6H9.3L7.6 13L6 10.1H1.5z" fill="none" stroke="#555" stroke-width="1.1" stroke-linejoin="round"/></svg>
<div class="t" style="left:275.6px;top:358.00px;font-size:11px;color:#3a3a3a;font-weight:400;">Tooltip</div>
<svg style="position:absolute;left:228px;top:382px;" width="13" height="13" viewBox="0 0 13 13"><rect x="1" y="1" width="10.5" height="10" fill="none" stroke="#888" stroke-width="1"/><path d="M3.8 3.8h5M6.3 3.8v5" stroke="#666" stroke-width="1"/></svg>
<div style="left:245.4px;top:379px;width:114px;height:19.5px;background:#00ad7e;border-radius:9.75px"></div>
<div class="t" style="left:256.3px;top:383.00px;font-size:12.3px;color:#fff;font-weight:400;letter-spacing:0.1px;-webkit-text-stroke:0.28px #fff;">Measure Values</div>
<div style="left:214px;top:437px;width:156px;height:138px;background:#fafafa;border:1px solid #dedede;border-radius:2px;box-sizing:border-box"></div>
<div class="t" style="left:221px;top:445.00px;font-size:12px;color:#555;font-weight:400;">Measure Values</div>
<div style="left:219px;top:467.8px;width:146px;height:19.5px;background:#00ad7e;border-radius:9.75px"></div>
<div class="t" style="left:230px;top:472.00px;font-size:12.3px;color:#fff;font-weight:400;letter-spacing:0.1px;-webkit-text-stroke:0.28px #fff;">SUM(Discount)</div>
<div style="left:219px;top:489.5px;width:146px;height:19.5px;background:#00ad7e;border-radius:9.75px"></div>
<div class="t" style="left:230px;top:494.00px;font-size:12.3px;color:#fff;font-weight:400;letter-spacing:0.1px;-webkit-text-stroke:0.28px #fff;">SUM(Profit)</div>
<div style="left:219px;top:511.2px;width:146px;height:19.5px;background:#00ad7e;border-radius:9.75px"></div>
<div class="t" style="left:230px;top:515.00px;font-size:12.3px;color:#fff;font-weight:400;letter-spacing:0.1px;-webkit-text-stroke:0.28px #fff;">SUM(Quantity)</div>
<div style="left:219px;top:532.9px;width:146px;height:19.5px;background:#00ad7e;border-radius:9.75px"></div>
<div class="t" style="left:230px;top:537.00px;font-size:12.3px;color:#fff;font-weight:400;letter-spacing:0.1px;-webkit-text-stroke:0.28px #fff;">SUM(Sales)</div>
<div style="left:374px;top:84px;width:1157px;height:26px;background:#f9f9f9;border:1px solid #dedede;border-radius:2px;box-sizing:border-box"></div>
<div style="left:374px;top:114px;width:1157px;height:26px;background:#f9f9f9;border:1px solid #dedede;border-radius:2px;box-sizing:border-box"></div>
<div style="left:501px;top:85px;width:1px;height:24px;background:#e3e3e3"></div>
<div style="left:501px;top:115px;width:1px;height:24px;background:#e3e3e3"></div>
<svg style="position:absolute;left:380px;top:90px;" width="11" height="12" viewBox="0 0 11 12"><path d="M2 4v7M5.5 4v7M9 4v7" stroke="#555" stroke-width="1.6"/><path d="M2 1.3v1.2M5.5 1.3v1.2M9 1.3v1.2" stroke="#555" stroke-width="1.6"/></svg>
<div class="t" style="left:397px;top:92.00px;font-size:12.3px;color:#555;font-weight:400;">Columns</div>
<svg style="position:absolute;left:380px;top:121px;" width="11" height="11" viewBox="0 0 11 11"><path d="M0.5 1.8h1.6M0.5 5.2h1.6M0.5 8.6h1.6" stroke="#555" stroke-width="1.5"/><path d="M3.4 1.8h7M3.4 5.2h7M3.4 8.6h7" stroke="#555" stroke-width="1.5"/></svg>
<div class="t" style="left:397px;top:122.00px;font-size:12.3px;color:#555;font-weight:400;">Rows</div>
<div style="left:504.2px;top:87.2px;width:141.8px;height:19.2px;background:#4a96b4;border-radius:9.6px"></div>
<div class="t" style="left:515px;top:91.00px;font-size:12.3px;color:#fff;font-weight:400;letter-spacing:0.1px;-webkit-text-stroke:0.28px #fff;">Measure Names</div>
<div style="left:504.2px;top:117.7px;width:141.8px;height:19.2px;background:#4a96b4;border-radius:9.6px"></div>
<div class="t" style="left:528.4px;top:122.00px;font-size:12.3px;color:#fff;font-weight:400;letter-spacing:0.1px;-webkit-text-stroke:0.28px #fff;">Category</div>
<div style="left:648.2px;top:117.7px;width:142px;height:19.2px;background:#4a96b4;border-radius:9.6px"></div>
<div class="t" style="left:672px;top:122.00px;font-size:12.3px;color:#fff;font-weight:400;letter-spacing:0.1px;-webkit-text-stroke:0.28px #fff;">Sub-Category</div>
<svg style="position:absolute;left:514px;top:123px;" width="10" height="10" viewBox="0 0 10 10"><rect x="1.5" y="1.2" width="7" height="7" fill="none" stroke="#fff" stroke-width="1"/><path d="M3.2 4.7h3.6" stroke="#fff" stroke-width="1"/></svg>
<svg style="position:absolute;left:658px;top:123px;" width="10" height="10" viewBox="0 0 10 10"><rect x="1.5" y="1.2" width="7" height="7" fill="none" stroke="#fff" stroke-width="1"/><path d="M3.2 4.7h3.6M5 2.9v3.6" stroke="#fff" stroke-width="1"/></svg>
<div style="left:374px;top:145px;width:1157px;height:624px;background:#fff;border:1px solid #dedede;border-radius:2px;box-sizing:border-box"></div>
<div class="t" style="left:384.6px;top:159.00px;font-size:20.3px;color:#5e5e5e;font-weight:400;">Sheet 1</div>
<div style="left:463.1px;top:222.3px;width:336.2px;height:16.8px;background:#f5f5f5"></div>
<div style="left:463.1px;top:255.9px;width:336.2px;height:16.8px;background:#f5f5f5"></div>
<div style="left:463.1px;top:289.5px;width:336.2px;height:16.8px;background:#f5f5f5"></div>
<div style="left:463.1px;top:323.1px;width:336.2px;height:16.8px;background:#f5f5f5"></div>
<div style="left:463.1px;top:356.70000000000005px;width:336.2px;height:16.8px;background:#f5f5f5"></div>
<div style="left:463.1px;top:390.3px;width:336.2px;height:16.8px;background:#f5f5f5"></div>
<div style="left:463.1px;top:423.9px;width:336.2px;height:16.8px;background:#f5f5f5"></div>
<div style="left:463.1px;top:457.5px;width:336.2px;height:16.8px;background:#f5f5f5"></div>
<div style="left:383.3px;top:205px;width:416px;height:2px;background:#e2e2e2"></div>
<div style="left:383.3px;top:272.2px;width:416px;height:1px;background:#d6d6d6"></div>
<div style="left:383.3px;top:423.4px;width:416px;height:1px;background:#d6d6d6"></div>
<div style="left:383.3px;top:490.6px;width:416.5px;height:1px;background:#d6d6d6"></div>
<div style="left:543px;top:189.4px;width:1px;height:302px;background:#d6d6d6"></div>
<div style="left:799px;top:188.7px;width:1px;height:302.9px;background:#d6d6d6"></div>
<div class="t" style="left:388.4px;top:193.00px;font-size:12.5px;color:#333;font-weight:400;-webkit-text-stroke:0.28px #333;">Category</div>
<div class="t" style="left:468.4px;top:193.00px;font-size:12.1px;color:#333;font-weight:400;-webkit-text-stroke:0.28px #333;">Sub-Catego..</div>
<div class="t" style="left:303.6px;width:300px;text-align:right;top:193.00px;font-size:12.5px;color:#333;font-weight:400;-webkit-text-stroke:0.28px #333;">Discount</div>
<div class="t" style="left:367.20000000000005px;width:300px;text-align:right;top:193.00px;font-size:12.5px;color:#333;font-weight:400;-webkit-text-stroke:0.28px #333;">Profit</div>
<div class="t" style="left:431.5px;width:300px;text-align:right;top:193.00px;font-size:12.5px;color:#333;font-weight:400;-webkit-text-stroke:0.28px #333;">Quantity</div>
<div class="t" style="left:495px;width:300px;text-align:right;top:193.00px;font-size:12.5px;color:#333;font-weight:400;-webkit-text-stroke:0.28px #333;">Sales</div>
<div class="t" style="left:388.2px;top:209.00px;font-size:12.7px;color:#333;font-weight:400;-webkit-text-stroke:0.28px #333;">Furniture</div>
<div class="t" style="left:468.6px;top:209.00px;font-size:12px;color:#808080;font-weight:400;">Bookcases</div>
<div class="t" style="left:303.6px;width:300px;text-align:right;top:209.00px;font-size:12.5px;color:#5c5c5c;font-weight:400;">48</div>
<div class="t" style="left:367.20000000000005px;width:300px;text-align:right;top:209.00px;font-size:12.5px;color:#5c5c5c;font-weight:400;">-3,473</div>
<div class="t" style="left:431.5px;width:300px;text-align:right;top:209.00px;font-size:12.5px;color:#5c5c5c;font-weight:400;">868</div>
<div class="t" style="left:495px;width:300px;text-align:right;top:209.00px;font-size:12.5px;color:#5c5c5c;font-weight:400;">114,880</div>
<div class="t" style="left:468.6px;top:225.00px;font-size:12px;color:#808080;font-weight:400;">Chairs</div>
<div class="t" style="left:303.6px;width:300px;text-align:right;top:225.00px;font-size:12.5px;color:#5c5c5c;font-weight:400;">105</div>
<div class="t" style="left:367.20000000000005px;width:300px;text-align:right;top:225.00px;font-size:12.5px;color:#5c5c5c;font-weight:400;">26,590</div>
<div class="t" style="left:431.5px;width:300px;text-align:right;top:225.00px;font-size:12.5px;color:#5c5c5c;font-weight:400;">2,356</div>
<div class="t" style="left:495px;width:300px;text-align:right;top:225.00px;font-size:12.5px;color:#5c5c5c;font-weight:400;">328,449</div>
<div class="t" style="left:468.6px;top:242.00px;font-size:12px;color:#808080;font-weight:400;">Furnishings</div>
<div class="t" style="left:303.6px;width:300px;text-align:right;top:242.00px;font-size:12.5px;color:#5c5c5c;font-weight:400;">132</div>
<div class="t" style="left:367.20000000000005px;width:300px;text-align:right;top:242.00px;font-size:12.5px;color:#5c5c5c;font-weight:400;">13,059</div>
<div class="t" style="left:431.5px;width:300px;text-align:right;top:242.00px;font-size:12.5px;color:#5c5c5c;font-weight:400;">3,563</div>
<div class="t" style="left:495px;width:300px;text-align:right;top:242.00px;font-size:12.5px;color:#5c5c5c;font-weight:400;">91,705</div>
<div class="t" style="left:468.6px;top:259.00px;font-size:12px;color:#808080;font-weight:400;">Tables</div>
<div class="t" style="left:303.6px;width:300px;text-align:right;top:259.00px;font-size:12.5px;color:#5c5c5c;font-weight:400;">83</div>
<div class="t" style="left:367.20000000000005px;width:300px;text-align:right;top:259.00px;font-size:12.5px;color:#5c5c5c;font-weight:400;">-17,725</div>
<div class="t" style="left:431.5px;width:300px;text-align:right;top:259.00px;font-size:12.5px;color:#5c5c5c;font-weight:400;">1,241</div>
<div class="t" style="left:495px;width:300px;text-align:right;top:259.00px;font-size:12.5px;color:#5c5c5c;font-weight:400;">206,966</div>
<div class="t" style="left:388.2px;top:276.00px;font-size:12.7px;color:#333;font-weight:400;-webkit-text-stroke:0.28px #333;">Office</div>
<div class="t" style="left:468.6px;top:276.00px;font-size:12px;color:#808080;font-weight:400;">Appliances</div>
<div class="t" style="left:303.6px;width:300px;text-align:right;top:276.00px;font-size:12.5px;color:#5c5c5c;font-weight:400;">78</div>
<div class="t" style="left:367.20000000000005px;width:300px;text-align:right;top:276.00px;font-size:12.5px;color:#5c5c5c;font-weight:400;">18,138</div>
<div class="t" style="left:431.5px;width:300px;text-align:right;top:276.00px;font-size:12.5px;color:#5c5c5c;font-weight:400;">1,729</div>
<div class="t" style="left:495px;width:300px;text-align:right;top:276.00px;font-size:12.5px;color:#5c5c5c;font-weight:400;">107,532</div>
<div class="t" style="left:388.2px;top:293.00px;font-size:12.7px;color:#333;font-weight:400;-webkit-text-stroke:0.28px #333;">Supplies</div>
<div class="t" style="left:468.6px;top:293.00px;font-size:12px;color:#808080;font-weight:400;">Art</div>
<div class="t" style="left:303.6px;width:300px;text-align:right;top:293.00px;font-size:12.5px;color:#5c5c5c;font-weight:400;">60</div>
<div class="t" style="left:367.20000000000005px;width:300px;text-align:right;top:293.00px;font-size:12.5px;color:#5c5c5c;font-weight:400;">6,528</div>
<div class="t" style="left:431.5px;width:300px;text-align:right;top:293.00px;font-size:12.5px;color:#5c5c5c;font-weight:400;">3,000</div>
<div class="t" style="left:495px;width:300px;text-align:right;top:293.00px;font-size:12.5px;color:#5c5c5c;font-weight:400;">27,119</div>
<div class="t" style="left:468.6px;top:309.00px;font-size:12px;color:#808080;font-weight:400;">Binders</div>
<div class="t" style="left:303.6px;width:300px;text-align:right;top:309.00px;font-size:12.5px;color:#5c5c5c;font-weight:400;">567</div>
<div class="t" style="left:367.20000000000005px;width:300px;text-align:right;top:309.00px;font-size:12.5px;color:#5c5c5c;font-weight:400;">30,222</div>
<div class="t" style="left:431.5px;width:300px;text-align:right;top:309.00px;font-size:12.5px;color:#5c5c5c;font-weight:400;">5,974</div>
<div class="t" style="left:495px;width:300px;text-align:right;top:309.00px;font-size:12.5px;color:#5c5c5c;font-weight:400;">203,413</div>
<div class="t" style="left:468.6px;top:326.00px;font-size:12px;color:#808080;font-weight:400;">Envelopes</div>
<div class="t" style="left:303.6px;width:300px;text-align:right;top:326.00px;font-size:12.5px;color:#5c5c5c;font-weight:400;">20</div>
<div class="t" style="left:367.20000000000005px;width:300px;text-align:right;top:326.00px;font-size:12.5px;color:#5c5c5c;font-weight:400;">6,964</div>
<div class="t" style="left:431.5px;width:300px;text-align:right;top:326.00px;font-size:12.5px;color:#5c5c5c;font-weight:400;">906</div>
<div class="t" style="left:495px;width:300px;text-align:right;top:326.00px;font-size:12.5px;color:#5c5c5c;font-weight:400;">16,476</div>
<div class="t" style="left:468.6px;top:343.00px;font-size:12px;color:#808080;font-weight:400;">Fasteners</div>
<div class="t" style="left:303.6px;width:300px;text-align:right;top:343.00px;font-size:12.5px;color:#5c5c5c;font-weight:400;">18</div>
<div class="t" style="left:367.20000000000005px;width:300px;text-align:right;top:343.00px;font-size:12.5px;color:#5c5c5c;font-weight:400;">950</div>
<div class="t" style="left:431.5px;width:300px;text-align:right;top:343.00px;font-size:12.5px;color:#5c5c5c;font-weight:400;">914</div>
<div class="t" style="left:495px;width:300px;text-align:right;top:343.00px;font-size:12.5px;color:#5c5c5c;font-weight:400;">3,024</div>
<div class="t" style="left:468.6px;top:360.00px;font-size:12px;color:#808080;font-weight:400;">Labels</div>
<div class="t" style="left:303.6px;width:300px;text-align:right;top:360.00px;font-size:12.5px;color:#5c5c5c;font-weight:400;">25</div>
<div class="t" style="left:367.20000000000005px;width:300px;text-align:right;top:360.00px;font-size:12.5px;color:#5c5c5c;font-weight:400;">5,546</div>
<div class="t" style="left:431.5px;width:300px;text-align:right;top:360.00px;font-size:12.5px;color:#5c5c5c;font-weight:400;">1,400</div>
<div class="t" style="left:495px;width:300px;text-align:right;top:360.00px;font-size:12.5px;color:#5c5c5c;font-weight:400;">12,486</div>
<div class="t" style="left:468.6px;top:377.00px;font-size:12px;color:#808080;font-weight:400;">Paper</div>
<div class="t" style="left:303.6px;width:300px;text-align:right;top:377.00px;font-size:12.5px;color:#5c5c5c;font-weight:400;">103</div>
<div class="t" style="left:367.20000000000005px;width:300px;text-align:right;top:377.00px;font-size:12.5px;color:#5c5c5c;font-weight:400;">34,054</div>
<div class="t" style="left:431.5px;width:300px;text-align:right;top:377.00px;font-size:12.5px;color:#5c5c5c;font-weight:400;">5,178</div>
<div class="t" style="left:495px;width:300px;text-align:right;top:377.00px;font-size:12.5px;color:#5c5c5c;font-weight:400;">78,479</div>
<div class="t" style="left:468.6px;top:393.00px;font-size:12px;color:#808080;font-weight:400;">Storage</div>
<div class="t" style="left:303.6px;width:300px;text-align:right;top:393.00px;font-size:12.5px;color:#5c5c5c;font-weight:400;">63</div>
<div class="t" style="left:367.20000000000005px;width:300px;text-align:right;top:393.00px;font-size:12.5px;color:#5c5c5c;font-weight:400;">21,279</div>
<div class="t" style="left:431.5px;width:300px;text-align:right;top:393.00px;font-size:12.5px;color:#5c5c5c;font-weight:400;">3,158</div>
<div class="t" style="left:495px;width:300px;text-align:right;top:393.00px;font-size:12.5px;color:#5c5c5c;font-weight:400;">223,844</div>
<div class="t" style="left:468.6px;top:410.00px;font-size:12px;color:#808080;font-weight:400;">Supplies</div>
<div class="t" style="left:303.6px;width:300px;text-align:right;top:410.00px;font-size:12.5px;color:#5c5c5c;font-weight:400;">15</div>
<div class="t" style="left:367.20000000000005px;width:300px;text-align:right;top:410.00px;font-size:12.5px;color:#5c5c5c;font-weight:400;">-1,189</div>
<div class="t" style="left:431.5px;width:300px;text-align:right;top:410.00px;font-size:12.5px;color:#5c5c5c;font-weight:400;">647</div>
<div class="t" style="left:495px;width:300px;text-align:right;top:410.00px;font-size:12.5px;color:#5c5c5c;font-weight:400;">46,674</div>
<div class="t" style="left:388.2px;top:427.00px;font-size:12.7px;color:#333;font-weight:400;-webkit-text-stroke:0.28px #333;">Technology</div>
<div class="t" style="left:468.6px;top:427.00px;font-size:12px;color:#808080;font-weight:400;">Accessories</div>
<div class="t" style="left:303.6px;width:300px;text-align:right;top:427.00px;font-size:12.5px;color:#5c5c5c;font-weight:400;">61</div>
<div class="t" style="left:367.20000000000005px;width:300px;text-align:right;top:427.00px;font-size:12.5px;color:#5c5c5c;font-weight:400;">41,937</div>
<div class="t" style="left:431.5px;width:300px;text-align:right;top:427.00px;font-size:12.5px;color:#5c5c5c;font-weight:400;">2,976</div>
<div class="t" style="left:495px;width:300px;text-align:right;top:427.00px;font-size:12.5px;color:#5c5c5c;font-weight:400;">167,380</div>
<div class="t" style="left:468.6px;top:444.00px;font-size:12px;color:#808080;font-weight:400;">Copiers</div>
<div class="t" style="left:303.6px;width:300px;text-align:right;top:444.00px;font-size:12.5px;color:#5c5c5c;font-weight:400;">11</div>
<div class="t" style="left:367.20000000000005px;width:300px;text-align:right;top:444.00px;font-size:12.5px;color:#5c5c5c;font-weight:400;">55,618</div>
<div class="t" style="left:431.5px;width:300px;text-align:right;top:444.00px;font-size:12.5px;color:#5c5c5c;font-weight:400;">234</div>
<div class="t" style="left:495px;width:300px;text-align:right;top:444.00px;font-size:12.5px;color:#5c5c5c;font-weight:400;">149,528</div>
<div class="t" style="left:468.6px;top:461.00px;font-size:12px;color:#808080;font-weight:400;">Machines</div>
<div class="t" style="left:303.6px;width:300px;text-align:right;top:461.00px;font-size:12.5px;color:#5c5c5c;font-weight:400;">35</div>
<div class="t" style="left:367.20000000000005px;width:300px;text-align:right;top:461.00px;font-size:12.5px;color:#5c5c5c;font-weight:400;">3,385</div>
<div class="t" style="left:431.5px;width:300px;text-align:right;top:461.00px;font-size:12.5px;color:#5c5c5c;font-weight:400;">440</div>
<div class="t" style="left:495px;width:300px;text-align:right;top:461.00px;font-size:12.5px;color:#5c5c5c;font-weight:400;">189,239</div>
<div class="t" style="left:468.6px;top:477.00px;font-size:12px;color:#808080;font-weight:400;">Phones</div>
<div class="t" style="left:303.6px;width:300px;text-align:right;top:477.00px;font-size:12.5px;color:#5c5c5c;font-weight:400;">137</div>
<div class="t" style="left:367.20000000000005px;width:300px;text-align:right;top:477.00px;font-size:12.5px;color:#5c5c5c;font-weight:400;">44,516</div>
<div class="t" style="left:431.5px;width:300px;text-align:right;top:477.00px;font-size:12.5px;color:#5c5c5c;font-weight:400;">3,289</div>
<div class="t" style="left:495px;width:300px;text-align:right;top:477.00px;font-size:12.5px;color:#5c5c5c;font-weight:400;">330,007</div>
<div style="left:130px;top:774px;width:55px;height:29px;background:#f8f8f8"></div>
<div style="left:129px;top:774px;width:1px;height:29px;background:#d6d6d6"></div>
<div style="left:185px;top:774px;width:1px;height:29px;background:#d6d6d6"></div>
<div style="left:210px;top:774px;width:1px;height:29px;background:#d6d6d6"></div>
<div style="left:236px;top:774px;width:1px;height:29px;background:#d6d6d6"></div>
<div style="left:261.5px;top:774px;width:1px;height:29px;background:#d6d6d6"></div>
<svg style="position:absolute;left:8px;top:784px;" width="8" height="12" viewBox="0 0 8 12"><path d="M1 2.5v6.5c0 0.8 1.2 1.5 2.8 1.5s2.8-0.7 2.8-1.5V2.5" fill="none" stroke="#777" stroke-width="0.9"/><ellipse cx="3.8" cy="2.5" rx="2.8" ry="1.4" fill="none" stroke="#777" stroke-width="0.9"/></svg>
<div class="t" style="left:20.3px;top:783.00px;font-size:12.1px;color:#777;font-weight:400;">Data Source</div>
<div class="t" style="left:136.2px;top:783.00px;font-size:12.3px;color:#444;font-weight:400;letter-spacing:0.1px;-webkit-text-stroke:0.28px #444;">Sheet 1</div>
<svg style="position:absolute;left:192px;top:782px;" width="16" height="16" viewBox="0 0 16 16"><path d="M6.8 10H1.5V1.5H10V7" fill="none" stroke="#666" stroke-width="1"/><path d="M4 8v-1M5.6 8V4.5M7.2 8V6" stroke="#888" stroke-width="0.8"/><path d="M7.9 8.9h6M10.9 5.9v6" stroke="#444" stroke-width="1.5"/></svg>
<svg style="position:absolute;left:217px;top:782px;" width="16" height="16" viewBox="0 0 16 16"><path d="M6.8 10H1.5V1.5H10V7M1.5 5.8H10M5.8 1.5V10" fill="none" stroke="#666" stroke-width="1"/><path d="M8.4 8.9h6M11.4 5.9v6" stroke="#444" stroke-width="1.5"/></svg>
<svg style="position:absolute;left:243px;top:782px;" width="16" height="16" viewBox="0 0 16 16"><path d="M1.6 1.5l3.8 1.3 4.6-1.3v6M1.6 1.5v8.3l3.8 1.2M5.4 2.8v8.2" fill="none" stroke="#666" stroke-width="1"/><path d="M7.7 8.9h6M10.7 5.9v6" stroke="#444" stroke-width="1.5"/></svg>
<div class="t" style="left:2.6px;top:808.00px;font-size:10.6px;color:#333;font-weight:400;">68 marks</div>
<div class="t" style="left:63.8px;top:808.00px;font-size:10.6px;color:#333;font-weight:400;">17 rows by 4 columns</div>
<div class="t" style="left:181.8px;top:808.00px;font-size:10.6px;color:#333;font-weight:400;">SUM of Measure Values: 2,623,032</div>
<div style="left:1201.5px;top:804px;width:1px;height:19px;background:#d6d6d6"></div>
<div style="left:1326.5px;top:804px;width:1px;height:19px;background:#d6d6d6"></div>
<div style="left:1352px;top:804px;width:1px;height:19px;background:#d6d6d6"></div>
<div style="left:1377.5px;top:804px;width:1px;height:19px;background:#d6d6d6"></div>
<div style="left:1422.5px;top:804px;width:1px;height:19px;background:#d6d6d6"></div>
<div style="left:1480px;top:804px;width:1px;height:19px;background:#d6d6d6"></div>
<svg style="position:absolute;left:1204px;top:806px;" width="12" height="14" viewBox="0 0 12 14"><circle cx="6" cy="4" r="2.6" fill="none" stroke="#666" stroke-width="1"/><path d="M1.5 12.5v-1.5a3 3 0 0 1 3-3h3a3 3 0 0 1 3 3v1.5z" fill="none" stroke="#666" stroke-width="1"/></svg>
<div class="t" style="left:1222.5px;top:808.00px;font-size:10.9px;color:#333;font-weight:400;">emma.marler</div>
<svg style="position:absolute;left:1312.7px;top:811.3px;" width="6" height="4" viewBox="0 0 6 4"><path d="M0.25 0.3999999999999999h5.5l-2.75 3.2z" fill="#111"/></svg>
<svg style="position:absolute;left:1430px;top:808px;" width="48" height="10" viewBox="0 0 48 10"><g fill="#b9b9b9"><rect x="0.5" y="1.5" width="1" height="6"/><path d="M6 1.5v6l-3.5-3z"/><path d="M19.5 1.5v6l-3.5-3z"/><path d="M26.5 1.5v6l3.5-3z"/><path d="M37.5 1.5v6l3.5-3z"/><rect x="41.5" y="1.5" width="1" height="6"/></g></svg>
<svg style="position:absolute;left:1486px;top:806px;" width="48" height="14" viewBox="0 0 48 14"><g fill="#bdbdbd"><rect x="1" y="2" width="2.5" height="2.5"/><rect x="4.5" y="2" width="2.5" height="2.5"/><rect x="8" y="2" width="2.5" height="2.5"/><rect x="1" y="5.5" width="2.5" height="2.5"/><rect x="4.5" y="5.5" width="2.5" height="2.5"/><rect x="8" y="5.5" width="2.5" height="2.5"/><rect x="1" y="9" width="2.5" height="2.5"/><rect x="4.5" y="9" width="2.5" height="2.5"/><rect x="8" y="9" width="2.5" height="2.5"/><rect x="18" y="2" width="9.5" height="6"/><rect x="18" y="9.3" width="2.5" height="2.5"/><rect x="21.5" y="9.3" width="2.5" height="2.5"/><rect x="25" y="9.3" width="2.5" height="2.5"/></g><rect x="37" y="3" width="9" height="9" fill="#555"/></svg>
</body></html>
